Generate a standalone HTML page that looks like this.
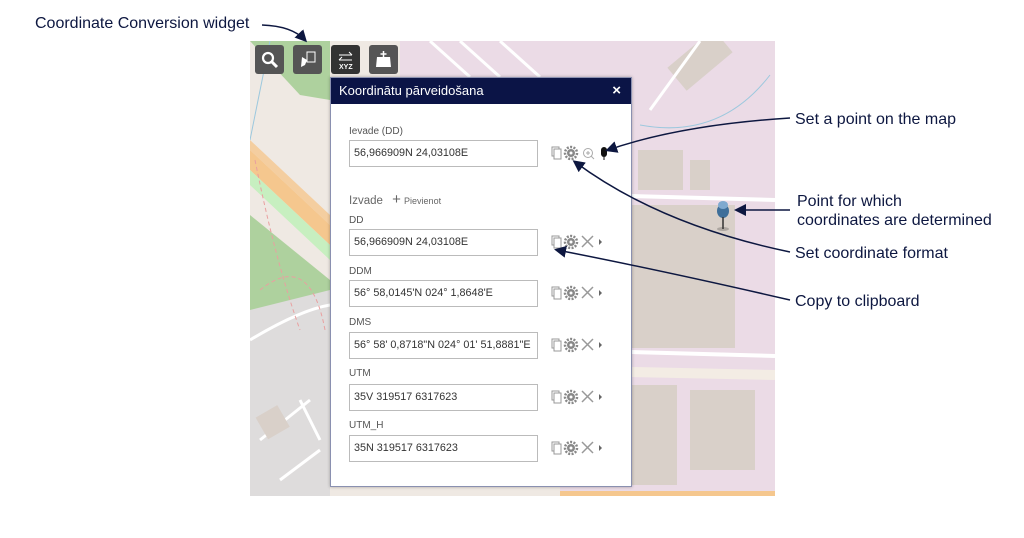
<!DOCTYPE html>
<html><head><meta charset="utf-8"><style>
*{margin:0;padding:0;box-sizing:border-box}
body{width:1024px;height:538px;background:#fff;position:relative;overflow:hidden;font-family:"Liberation Sans",sans-serif}
.ann{position:absolute;color:#0d1740;font-size:16px;line-height:19px}
.map{position:absolute;left:250px;top:41px;width:525px;height:455px;overflow:hidden;background:#efe9e3}
.btn{position:absolute;top:45px;width:29px;height:29px;background:#555;border-radius:3px}
.panel{position:absolute;left:330px;top:77px;width:302px;height:410px;background:#fff;border:1px solid #8a90b0;box-shadow:0 0 3px rgba(0,0,0,.3)}
.hdr{height:26px;background:#0b1446;color:#fff;font-size:13px;line-height:26px;padding-left:8px}
.hdr span{position:absolute;right:10px;top:0;font-size:15px;font-weight:bold}
.lbl{position:absolute;left:18px;font-size:10px;color:#555}
.inp{position:absolute;left:18px;width:189px;height:27px;border:1px solid #bbb;font-size:10.8px;color:#333;line-height:25px;padding-left:4px}
.ic{position:absolute;left:218px}
</style></head><body>
<div class="ann" style="left:35px;top:14px">Coordinate Conversion widget</div>
<div class="ann" style="left:795px;top:110px">Set a point on the map</div>
<div class="ann" style="left:797px;top:192px">Point for which<br>coordinates are determined</div>
<div class="ann" style="left:795px;top:244px">Set coordinate format</div>
<div class="ann" style="left:795px;top:292px">Copy to clipboard</div>
<div class="map">
<svg width="525" height="455" viewBox="250 41 525 455" style="position:absolute;left:0;top:0">
<rect x="250" y="41" width="525" height="455" fill="#efe9e3"/>
<polygon points="400,41 775,41 775,496 560,496 560,77 400,77" fill="#ebdbe6"/>
<line x1="430" y1="41" x2="470" y2="77" stroke="#fff" stroke-width="3"/>
<line x1="460" y1="41" x2="500" y2="77" stroke="#fff" stroke-width="3"/>
<line x1="500" y1="41" x2="540" y2="77" stroke="#fff" stroke-width="3"/>
<polygon points="250,41 330,41 330,100 300,95 250,41" fill="#aed19e"/>
<polygon points="250,215 330,280 330,335 250,320" fill="#aed19e"/>
<polygon points="250,310 330,290 330,496 250,496" fill="#dedcdc"/>
<polygon points="250,150 330,225 330,245 250,170" fill="#f5c78e"/>
<polygon points="250,170 330,245 330,260 250,185" fill="#c7efc0"/>
<polygon points="250,140 330,215 330,225 250,150" fill="#f5c78e" opacity=".8"/>
<rect x="632" y="205" width="103" height="143" fill="#d9d0c9"/>
<rect x="638" y="150" width="45" height="40" fill="#d9d0c9"/>
<rect x="690" y="160" width="20" height="30" fill="#d9d0c9"/>
<rect x="690" y="390" width="65" height="80" fill="#d9d0c9"/>
<rect x="632" y="385" width="45" height="100" fill="#d9d0c9"/>
<rect x="670" y="45" width="60" height="30" fill="#d9d0c9" transform="rotate(-40 700 60)"/>
<line x1="632" y1="196" x2="775" y2="200" stroke="#fff" stroke-width="4"/>
<line x1="632" y1="352" x2="775" y2="356" stroke="#fff" stroke-width="4"/>
<line x1="632" y1="372" x2="775" y2="375" stroke="#f3ece4" stroke-width="10"/>
<line x1="700" y1="41" x2="650" y2="110" stroke="#fff" stroke-width="3"/>
<line x1="560" y1="496" x2="775" y2="496" stroke="#f5c78e" stroke-width="10"/>
<line x1="270" y1="41" x2="250" y2="140" stroke="#9cc8de" stroke-width="1"/>
<path d="M770,75 Q720,140 640,125" stroke="#9cc8de" fill="none"/>
<path d="M250,340 Q300,310 330,305" stroke="#fff" stroke-width="3" fill="none"/>
<path d="M260,440 L310,400 M280,480 L320,450 M300,400 L320,440" stroke="#fff" stroke-width="3" fill="none"/>
<rect x="260" y="410" width="25" height="25" fill="#d9d0c9" transform="rotate(-30 272 422)"/>
<path d="M255,160 Q275,260 300,330 M260,290 Q310,250 325,330" stroke="#e9a0a0" stroke-dasharray="4 3" fill="none"/>
</svg>
<svg style="position:absolute;left:463px;top:158px" width="20" height="34"><ellipse cx="10" cy="30" rx="6" ry="2" fill="rgba(0,0,0,.2)"/><ellipse cx="10" cy="12" rx="6" ry="7" fill="#3f6f9a"/><ellipse cx="10" cy="6" rx="5" ry="4" fill="#7fa9cf"/><line x1="10" y1="18" x2="10" y2="30" stroke="#333" stroke-width="1.5"/></svg>
</div>
<div class="btn" style="left:255px"><svg width="29" height="29"><circle cx="13" cy="13" r="5" stroke="#fff" stroke-width="2.2" fill="none"/><line x1="16.5" y1="16.5" x2="22" y2="22" stroke="#fff" stroke-width="3"/></svg></div>
<div class="btn" style="left:293px"><svg width="29" height="29"><rect x="14" y="7" width="8" height="10" stroke="#fff" fill="none"/><path d="M9,12 L14,15 L12,20 L8,22 Z" fill="#fff"/></svg></div>
<div class="btn" style="left:331px;background:#333"><svg width="29" height="29"><path d="M8,10 H21 M18,7 L21,10 M21,15 H8 M11,12 L8,15" stroke="#fff" fill="none"/><text x="8" y="24" font-size="7" fill="#fff" font-weight="bold" font-family="Liberation Sans">XYZ</text></svg></div>
<div class="btn" style="left:369px"><svg width="29" height="29"><path d="M8,12 H21 L22,22 H7 Z" fill="#fff"/><path d="M14.5,6 V12 M11.5,9 H17.5" stroke="#fff" stroke-width="1.5"/></svg></div>
<div class="panel">
<div class="hdr">Koordinātu pārveidošana<span>×</span></div>
<div class="lbl" style="top:48px">Ievade (DD)</div>
<div class="inp" style="top:62px">56,966909N 24,03108E</div>
<div class="lbl" style="top:113px;font-size:11.5px;color:#666">Izvade <span style="font-size:15px;margin-left:6px">+</span> <span style="font-size:9px">Pievienot</span></div>
<div class="lbl" style="top:137px">DD</div><div class="inp" style="top:151px">56,966909N 24,03108E</div>
<div class="lbl" style="top:188px">DDM</div><div class="inp" style="top:202px">56° 58,0145'N 024° 1,8648'E</div>
<div class="lbl" style="top:239px">DMS</div><div class="inp" style="top:254px">56° 58' 0,8718"N 024° 01' 51,8881"E</div>
<div class="lbl" style="top:290px">UTM</div><div class="inp" style="top:306px">35V 319517 6317623</div>
<div class="lbl" style="top:342px">UTM_H</div><div class="inp" style="top:357px">35N 319517 6317623</div>
<svg class="ic" style="top:67px" width="60" height="16"><rect x="3" y="2" width="7" height="9" stroke="#999" fill="none"/><rect x="5" y="4" width="7" height="10" stroke="#999" fill="#fff"/><circle cx="22" cy="8" r="6" fill="none" stroke="#888" stroke-width="2.5" stroke-dasharray="2 1.4"/><circle cx="22" cy="8" r="4" fill="#888"/><circle cx="22" cy="8" r="1.5" fill="#fff"/><circle cx="39" cy="8" r="4.5" stroke="#aaa" fill="none"/><line x1="42" y1="11" x2="45" y2="14" stroke="#aaa"/><line x1="37" y1="8" x2="41" y2="8" stroke="#aaa"/><line x1="39" y1="6" x2="39" y2="10" stroke="#aaa"/><rect x="52" y="2" width="6" height="10" rx="3" fill="#111"/><line x1="55" y1="12" x2="55" y2="15" stroke="#111"/></svg>
<svg class="ic" style="top:156px" width="60" height="16"><rect x="3" y="2" width="7" height="9" stroke="#999" fill="none"/><rect x="5" y="4" width="7" height="10" stroke="#999" fill="#fff"/><circle cx="22" cy="8" r="6" fill="none" stroke="#888" stroke-width="2.5" stroke-dasharray="2 1.4"/><circle cx="22" cy="8" r="4" fill="#888"/><circle cx="22" cy="8" r="1.5" fill="#fff"/><path d="M33,2 L44,13 M44,2 L33,13" stroke="#999" stroke-width="1.5"/><path d="M50,5 L53,8 L50,11Z" fill="#666"/></svg>
<svg class="ic" style="top:207px" width="60" height="16"><rect x="3" y="2" width="7" height="9" stroke="#999" fill="none"/><rect x="5" y="4" width="7" height="10" stroke="#999" fill="#fff"/><circle cx="22" cy="8" r="6" fill="none" stroke="#888" stroke-width="2.5" stroke-dasharray="2 1.4"/><circle cx="22" cy="8" r="4" fill="#888"/><circle cx="22" cy="8" r="1.5" fill="#fff"/><path d="M33,2 L44,13 M44,2 L33,13" stroke="#999" stroke-width="1.5"/><path d="M50,5 L53,8 L50,11Z" fill="#666"/></svg>
<svg class="ic" style="top:259px" width="60" height="16"><rect x="3" y="2" width="7" height="9" stroke="#999" fill="none"/><rect x="5" y="4" width="7" height="10" stroke="#999" fill="#fff"/><circle cx="22" cy="8" r="6" fill="none" stroke="#888" stroke-width="2.5" stroke-dasharray="2 1.4"/><circle cx="22" cy="8" r="4" fill="#888"/><circle cx="22" cy="8" r="1.5" fill="#fff"/><path d="M33,2 L44,13 M44,2 L33,13" stroke="#999" stroke-width="1.5"/><path d="M50,5 L53,8 L50,11Z" fill="#666"/></svg>
<svg class="ic" style="top:311px" width="60" height="16"><rect x="3" y="2" width="7" height="9" stroke="#999" fill="none"/><rect x="5" y="4" width="7" height="10" stroke="#999" fill="#fff"/><circle cx="22" cy="8" r="6" fill="none" stroke="#888" stroke-width="2.5" stroke-dasharray="2 1.4"/><circle cx="22" cy="8" r="4" fill="#888"/><circle cx="22" cy="8" r="1.5" fill="#fff"/><path d="M33,2 L44,13 M44,2 L33,13" stroke="#999" stroke-width="1.5"/><path d="M50,5 L53,8 L50,11Z" fill="#666"/></svg>
<svg class="ic" style="top:362px" width="60" height="16"><rect x="3" y="2" width="7" height="9" stroke="#999" fill="none"/><rect x="5" y="4" width="7" height="10" stroke="#999" fill="#fff"/><circle cx="22" cy="8" r="6" fill="none" stroke="#888" stroke-width="2.5" stroke-dasharray="2 1.4"/><circle cx="22" cy="8" r="4" fill="#888"/><circle cx="22" cy="8" r="1.5" fill="#fff"/><path d="M33,2 L44,13 M44,2 L33,13" stroke="#999" stroke-width="1.5"/><path d="M50,5 L53,8 L50,11Z" fill="#666"/></svg>
</div>
<svg style="position:absolute;left:0;top:0" width="1024" height="538">
<defs><marker id="a" markerWidth="8" markerHeight="8" refX="6" refY="4" orient="auto"><path d="M0,0 L8,4 L0,8 Z" fill="#0d1740"/></marker></defs>
<g stroke="#0d1740" stroke-width="1.5" fill="none" marker-end="url(#a)">
<path d="M262,25 Q292,26 305,40"/>
<path d="M790,118 Q680,125 608,150"/>
<path d="M790,210 L737,210"/>
<path d="M790,252 Q660,225 575,162"/>
<path d="M790,300 Q660,270 557,250"/>
</g></svg>
</body></html>
